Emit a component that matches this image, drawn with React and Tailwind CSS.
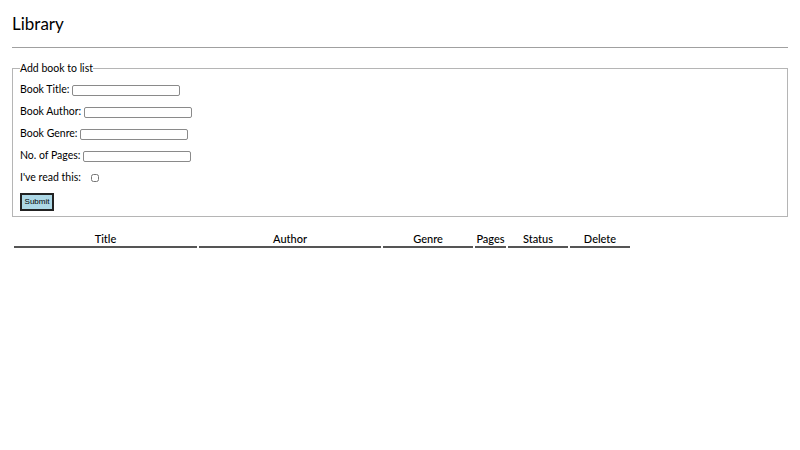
export default function App() {
    const fields = [
        { label: "Book Title:", w: "w-[108px]" },
        { label: "Book Author:", w: "w-[108px]" },
        { label: "Book Genre:", w: "w-[108px]" },
        { label: "No. of Pages:", w: "w-[108px]" },
    ];
    const cols = [
        { name: "Title", w: "w-[183px]" },
        { name: "Author", w: "w-[182px]" },
        { name: "Genre", w: "w-[90px]" },
        { name: "Pages", w: "w-[31px]" },
        { name: "Status", w: "w-[60px]" },
        { name: "Delete", w: "w-[60px]" },
    ];

    return (
        <div className="min-h-screen bg-white px-3 text-[10.5px] text-black" style={{ fontFamily: "Lato, sans-serif" }}>
            <h1 className="pt-[13px] text-[17px] leading-[22px]">Library</h1>
            <hr className="mt-[12px] border-t border-[#a0a0a0]" />
            <fieldset className="mt-[13px] border border-[#b5b5b5] px-[7px] pb-[5px] pt-0">
                <legend className="px-0 text-[10.5px] leading-[14px]">Add book to list</legend>
                <div className="flex flex-col gap-[8px] pt-[8px]">
                    {fields.map((f) => (
                        <div key={f.label} className="flex h-[14px] items-center gap-[3px]">
                            <span>{f.label}</span>
                            <input type="text" className={`${f.w} h-[11px] rounded-[2px] border border-[#8a8a8a]`} />
                        </div>
                    ))}
                    <div className="flex h-[14px] items-center gap-[10px]">
                        <span>I've read this:</span>
                        <input type="checkbox" className="h-[8px] w-[8px]" />
                    </div>
                    <div>
                        <button type="submit" className="h-[18px] w-[34px] border-2 border-[#222] bg-[#add8e6] p-0 text-[8px] leading-none" style={{ fontFamily: '"Liberation Sans", sans-serif' }}>
                            Submit
                        </button>
                    </div>
                </div>
            </fieldset>
            <table className="mt-[13px] border-separate border-spacing-[2px]">
                <thead>
                    <tr>
                        {cols.map((c) => (
                            <th key={c.name} className={`${c.w} border-b-2 border-[#555] p-0 text-[11px] font-medium leading-[14px]`}>
                                {c.name}
                            </th>
                        ))}
                    </tr>
                </thead>
            </table>
        </div>
    );
}
